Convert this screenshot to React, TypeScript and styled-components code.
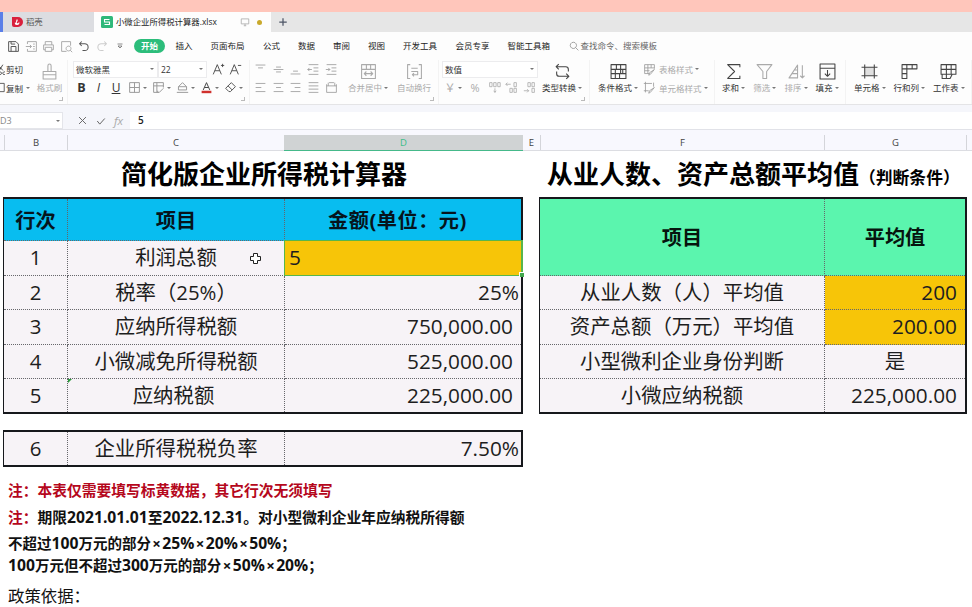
import React from "react";
import styled, { createGlobalStyle, css } from "styled-components";

const Global = createGlobalStyle`
  * { box-sizing: border-box; }
  html, body { margin: 0; padding: 0; background: #fff; overflow: hidden; }
  body { font-family: "Open Sans", "Noto Sans CJK SC", sans-serif; color: #1c1c1c; }
  svg { display: block; flex: none; }
`;

const Window = styled.div`
  width: 972px;
  height: 607px;
  overflow: hidden;
  display: flex;
  flex-direction: column;
  background: #fff;
`;

/* ---------- window tabs ---------- */
const TopStrip = styled.div`
  height: 12px;
  flex: none;
  background: #ffc6bb;
`;
const TabBar = styled.div`
  height: 20px;
  flex: none;
  display: flex;
  align-items: stretch;
  background: #e6e6e6;
`;
const HomeEdge = styled.div`
  width: 3px;
  background: #5a7fe8;
`;
const Tab = styled.div<{ $w: number; $active?: boolean }>`
  width: ${(p) => p.$w}px;
  display: flex;
  align-items: center;
  padding-left: ${(p) => (p.$active ? 7 : 9)}px;
  background: ${(p) => (p.$active ? "#fdfdfd" : "#dcdde1")};
  font-size: 8.4px;
  line-height: 20px;
  white-space: nowrap;
  color: ${(p) => (p.$active ? "#222" : "#555")};
`;
const TabText = styled.span<{ $w: number }>`
  width: ${(p) => p.$w}px;
  margin-left: 3px;
`;
const Dot = styled.i`
  width: 5px;
  height: 5px;
  margin-left: 7px;
  border-radius: 50%;
  background: #c9a92c;
`;
const NewTab = styled.div`
  width: 24px;
  display: flex;
  align-items: center;
  justify-content: center;
`;

/* ---------- ribbon ---------- */
const Menu = styled.div`
  height: 28px;
  flex: none;
  display: flex;
  align-items: center;
  background: #fdfdfd;
  font-size: 8.5px;
  white-space: nowrap;
`;
const QuickTools = styled.div`
  width: 134px;
  padding-left: 5px;
  display: flex;
  align-items: center;
`;
const Slot = styled.div<{ $w: number }>`
  width: ${(p) => p.$w}px;
  flex: none;
  display: flex;
  align-items: center;
  justify-content: center;
`;
const StartPill = styled.div`
  width: 31px;
  height: 14px;
  border-radius: 7px;
  background: #2cbd7b;
  color: #fff;
  font-weight: 700;
  line-height: 13px;
  text-align: center;
`;
const MenuItem = styled.div<{ $w: number }>`
  width: ${(p) => p.$w}px;
  flex: none;
  line-height: 14px;
  color: #222;
`;
const Search = styled.div`
  display: flex;
  align-items: center;
  gap: 2px;
  font-size: 8.5px;
  line-height: 14px;
  color: #666;
`;
const Ribbon = styled.div`
  height: 45px;
  flex: none;
  display: flex;
  background: #fdfdfd;
  border-bottom: 1px solid #e4e4e6;
  font-size: 8.5px;
  white-space: nowrap;
`;
const Group = styled.div<{ $w: number; $pad?: number }>`
  width: ${(p) => p.$w}px;
  flex: none;
  display: flex;
  padding-left: ${(p) => p.$pad ?? 0}px;
  border-right: 1px solid #f3f3f3;
`;
const Column = styled.div<{ $w?: number }>`
  width: ${(p) => (p.$w ? p.$w + "px" : "auto")};
  height: 44px;
  flex: none;
  display: flex;
  flex-direction: column;
`;
const ToolRow = styled.div<{ $dim?: boolean; $gap?: number }>`
  height: 18.5px;
  flex: none;
  display: flex;
  align-items: center;
  gap: ${(p) => p.$gap ?? 0}px;
  color: ${(p) => (p.$dim ? "#aaa" : "#333")};
`;
const Field = styled.div<{ $w: number }>`
  width: ${(p) => p.$w}px;
  height: 17px;
  padding: 0 3px 0 2px;
  display: flex;
  align-items: center;
  justify-content: space-between;
  border: 1px solid #ececee;
  background: #fff;
  color: #333;
`;
const Big = styled.div<{ $w: number; $dim?: boolean }>`
  width: ${(p) => p.$w}px;
  flex: none;
  display: flex;
  flex-direction: column;
  align-items: center;
  padding-top: 3px;
  color: ${(p) => (p.$dim ? "#aaa" : "#333")};
`;
const BigLabel = styled.div`
  height: 14px;
  margin-top: 1px;
  display: flex;
  align-items: center;
  line-height: 14px;
`;
const Caret = styled.i`
  width: 0;
  height: 0;
  flex: none;
  margin-left: 2px;
  border: 2px solid transparent;
  border-top: 2.5px solid #777;
  border-bottom: 0;
`;
const Corner = styled.div`
  width: 4px;
  height: 4px;
  flex: none;
  margin: auto 4px 3px auto;
  border: solid #bbb;
  border-width: 0 1px 1px 0;
`;
const Glyph = styled.span<{ $s: number; $b?: boolean; $i?: boolean; $u?: boolean; $c?: string }>`
  font-size: ${(p) => p.$s}px;
  line-height: 14px;
  font-weight: ${(p) => (p.$b ? 700 : 400)};
  font-style: ${(p) => (p.$i ? "italic" : "normal")};
  text-decoration: ${(p) => (p.$u ? "underline" : "none")};
  color: ${(p) => p.$c ?? "inherit"};
`;

/* ---------- formula bar and column headers ---------- */
const FormulaBar = styled.div`
  height: 25px;
  flex: none;
  padding-top: 7px;
  display: flex;
  background: #f5f6fb;
  border-bottom: 1px solid #e1e2e8;
`;
const NameBox = styled.div`
  width: 63px;
  height: 17px;
  display: flex;
  align-items: center;
  justify-content: space-between;
  padding-right: 2px;
  background: #fff;
  border: 1px solid #e4e5ea;
  border-left: 0;
  font-size: 9px;
  color: #888;
`;
const FormulaTools = styled.div`
  width: 67px;
  height: 17px;
  padding-left: 10px;
  display: flex;
  align-items: center;
`;
const FormulaInput = styled.div`
  flex: 1;
  height: 17px;
  padding-left: 8px;
  background: #fff;
  font-size: 10px;
  font-weight: 600;
  line-height: 17px;
`;
const ColumnHeads = styled.div`
  height: 21px;
  flex: none;
  display: flex;
  align-items: flex-end;
  background: #f8f8fe;
  border-bottom: 1px solid #dcdde2;
`;
const ColHead = styled.div<{ $w: number; $on?: boolean; $line?: boolean }>`
  width: ${(p) => p.$w}px;
  height: ${(p) => (p.$on ? 16 : 15)}px;
  margin-bottom: ${(p) => (p.$on ? -1 : 0)}px;
  flex: none;
  font-size: 9.5px;
  line-height: 15px;
  text-align: center;
  color: ${(p) => (p.$on ? "#3cbd88" : "#444")};
  background: ${(p) => (p.$on ? "#d0d3d4" : "transparent")};
  border-right: ${(p) => (p.$line ? "1px solid #d4d5da" : "0")};
  border-bottom: ${(p) => (p.$on ? "1.5px solid #45b98a" : "0")};
`;

/* ---------- sheet ---------- */
const Sheet = styled.div`
  flex: 1;
  display: flex;
  align-items: flex-start;
  padding-left: 3px;
  background: #fff;
`;
const Panel = styled.div<{ $w: number; $gap?: number }>`
  width: ${(p) => p.$w}px;
  margin-right: ${(p) => p.$gap ?? 0}px;
  flex: none;
`;
const Title = styled.div<{ $left: number }>`
  height: 46px;
  padding-left: ${(p) => p.$left}px;
  font-size: 26px;
  font-weight: 700;
  line-height: 47px;
  white-space: nowrap;
  color: #000;
  & small { font-size: 16.8px; }
`;
const Grid = styled.div<{ $cols: string; $rows: string; $mt?: number }>`
  display: grid;
  grid-template-columns: ${(p) => p.$cols};
  grid-template-rows: ${(p) => p.$rows};
  margin-top: ${(p) => p.$mt ?? 0}px;
  border: 2px solid #16181c;
  border-left-width: 1px;
  background: #f7f3f7;
`;
const Cell = styled.div<{
  $tone?: "blue" | "green" | "amber";
  $align?: "left" | "right";
  $pad?: number;
  $lastCol?: boolean;
  $lastRow?: boolean;
}>`
  position: relative;
  display: flex;
  align-items: center;
  justify-content: ${(p) =>
    p.$align === "right" ? "flex-end" : p.$align === "left" ? "flex-start" : "center"};
  padding: 0 ${(p) => p.$pad ?? 0}px ${(p) => (p.$tone === "blue" || p.$tone === "green" ? 0 : p.$lastRow ? 1 : 2)}px;
  font-size: ${(p) => (p.$align ? 20.8 : 20.4)}px;
  line-height: 30px;
  white-space: nowrap;
  color: #1d1d20;
  border-right: ${(p) => (p.$lastCol ? "0" : "1px dotted #66666b")};
  border-bottom: ${(p) => (p.$lastRow ? "0" : "1px dotted #66666b")};
  ${(p) => p.$tone === "blue" && css`background: #08bdf0; font-weight: 700; font-size: 20.2px; color: #06141c;`}
  ${(p) => p.$tone === "green" && css`background: #5bf5ae; font-weight: 700; font-size: 20.2px; color: #06140e;`}
  ${(p) => p.$tone === "amber" && css`background: #f7c508;`}
`;
const Amount = styled.span`
  margin-right: 11px;
  letter-spacing: 0.5px;
`;
const NudgedName = styled.span`
  margin-right: 5px;
`;
const Selection = styled.i`
  position: absolute;
  inset: -1px -2px -1px -1px;
  border: 1.5px solid #57b64c;
  border-right-width: 2px;
  &::after {
    content: "";
    position: absolute;
    right: -3px;
    bottom: -2px;
    width: 4px;
    height: 4px;
    background: #43a84e;
    border: 1px solid #fff;
    border-width: 1px 0 0 1px;
  }
`;
const Pointer = styled.svg`
  position: absolute;
  left: 181px;
  top: 11px;
`;
const ErrorMark = styled.i`
  position: absolute;
  left: 0;
  top: 0;
  border: 2px solid #2c9a3c;
  border-right-color: transparent;
  border-bottom-color: transparent;
`;
const Note = styled.div<{ $h: number; $red?: boolean; $plain?: boolean; $s?: number }>`
  height: ${(p) => p.$h}px;
  padding-left: 5px;
  font-size: ${(p) => p.$s ?? 14.75}px;
  line-height: ${(p) => p.$h}px;
  font-weight: ${(p) => (p.$plain ? 400 : 700)};
  white-space: nowrap;
  color: ${(p) => (p.$red ? "#b5071c" : "#111")};
  & em { font-style: normal; color: #b5071c; }
  & b { font-size: 15.7px; font-weight: 700; line-height: 1; }
`;
const Times = styled.span`
  padding: 0 1.4px;
  font-size: 15px;
  line-height: 1;
`;
const Notes = styled.div`
  padding-top: 10px;
`;

/* ---------- icons ---------- */
type IconProps = {
  d: string;
  w?: number;
  h?: number;
  vb?: string;
  c?: string;
  sw?: number;
  children?: React.ReactNode;
};
const Icon = ({ d, w = 12, h = w, vb = "0 0 16 16", c = "#555", sw = 1.2, children }: IconProps) => (
  <svg width={w} height={h} viewBox={vb} fill="none" stroke={c} strokeWidth={sw} strokeLinejoin="round">
    {children}
    <path d={d} />
  </svg>
);

const dim = "#aaa";
const dark = "#444";

const P = {
  save: "M2 2h9l3 3v9H2zM5 14V8h6v6M5 2v3h5",
  exportPdf: "M3 5V2h11v12H3v-3M1 8h7M6 6l2 2-2 2M10 5h2M10 8h2M10 11h2",
  print: "M4 6V2h8v4M4 12H2V6h12v6h-2M4 9h8v5H4z",
  preview: "M8 14H2V2h11v5M10.500 7.500a3 3 0 1 0 .01 0M12.500 12.500l2.500 2.500",
  undo: "M5 2L2 5l3 3M2 5h7a4.500 4.500 0 0 1 0 9H6",
  redo: "M11 2l3 3-3 3M14 5H7a4.500 4.500 0 0 0 0 9h3",
  more: "M3 4h10M4 8l4 4 4-4z",
  brush: "M6.500 8V2.500a1.500 1.500 0 0 1 3 0V8M2 8h12v7H2zM2 11h12",
  cut: "M-1 2l7 8M6 2L1 10M2 12a2 2 0 1 1-.01 0M8 12a2 2 0 1 1-.01 0",
  copy: "M2 2h8v12H0",
  border: "M2 2h12v12H2zM8 2v12M2 8h12",
  cellStyle: "M8 14H2V2h12v6M2 6h12M6 2v12M14 9l-5 5H7v-2",
  bucket: "M3 7l5-5 5 5v4H3zM1 14h14M3 7h10",
  eraser: "M2 9l7-7 5 5-6 6H6zM5 6l5 5",
  top: "M2 2.500h12M5 6h6",
  middle: "M2 8h12M5 5h6M5 11h6",
  bottom: "M2 13.500h12M5 10h6",
  indentOut: "M2 2h12M8 6h6M8 10h6M2 14h12M6 8H1M3 6L1 8l2 2",
  indentIn: "M2 2h12M8 6h6M8 10h6M2 14h12M6 8H1M4 6l2 2-2 2",
  left: "M2 3h12M2 8h7M2 13h12",
  center: "M2 3h12M5 8h6M2 13h12",
  right: "M2 3h12M7 8h7M2 13h12",
  justify: "M2 2h12M2 6h12M2 10h12M2 14h12",
  distribute: "M2 4v10h12V4M2 6h12M4 2v4M12 2v4M5 2h6",
  merge: "M1.500 1.500h13v13h-13zM1.500 6h13M6 1.500v4.500M10 1.500v4.500M4 10h8M6 8l-2 2 2 2M10 8l2 2-2 2",
  wrap: "M4 1.500H1.500v13H4M12 1.500h2.500v13H12M5 5h6M5 8h6v3H6M7.500 9.500L6 11l1.500 1.500",
  convert: "M4.500 1L2 3.500 4.500 6M2 3.500h9a2.500 2.500 0 0 1 2.500 2.500v2M11.500 10l2.500 2.500-2.500 2.500M14 12.500H5A2.500 2.500 0 0 1 2.500 10V8",
  condFormat: "M1 1.500h14v13H1zM1 6h14M1 10h14M6 1.500v4.500M10 1.500v8.500M5 6v8.500M9 10v4.500M12 6v4",
  tableStyle: "M8 13H2V2h12v5M2 6h12M6 2v11M10 2v4M2 9.500h6M14 8l-5 6-2 1 1-3z",
  cellBrush: "M3 1v13M1 3h10M1 12h6M13 2v5M14 8l-5 6-2 1 1-3z",
  sum: "M14 4V1.500H2.500L9 8l-6.500 6.500H14V12",
  filter: "M1 1.500h14L10 8v6.500H6.500V8z",
  sort: "M1 14L9 2v12zM4 10h5M6 6.500h3M13.500 2v12M11.500 12l2 2 2-2",
  fillDown: "M1 1h14v14H1zM1 5h14M8 6.500v6M5.500 10L8 12.500 10.500 10",
  cell: "M3.500 1.500v13M12.500 1.500v13M.5 4h15M.5 12h15",
  rowcol: "M1 1.500h14v4H1zM1 1.500h4.500v13H1zM5.500 1.500v4M10.500 1.500v4M1 10h4.500",
  sheet: "M1 1.500h14v9H1zM1 6h14M6 1.500v13M10.500 1.500v9M2 10v4.500h7.500l2-4",
};

const Dropped = ({ children }: { children: React.ReactNode }) => (
  <>
    {children}
    <Caret />
  </>
);

type BigProps = { w: number; d: string; label: string; off?: boolean; caret?: boolean; fill?: string };
const BigTool = ({ w, d, label, off, caret = true, fill }: BigProps) => (
  <Big $w={w} $dim={off}>
    <Icon d={d} w={17} c={off ? dim : dark} sw={1}>
      {fill && <rect x="3.500" y="4" width="9" height="8" fill={fill} stroke="none" />}
    </Icon>
    <BigLabel>
      {label}
      {caret && <Caret />}
    </BigLabel>
  </Big>
);

const menus: [string, number][] = [
  ["插入", 35], ["页面布局", 52.5], ["公式", 35], ["数据", 35], ["审阅", 35], ["视图", 35],
  ["开发工具", 52.5], ["会员专享", 52], ["智能工具箱", 61],
];

const leftRows: [string, string, string, number][] = [
  ["2", "税率（25%）", "25%", 2],
  ["3", "应纳所得税额", "750,000.00", 8],
  ["4", "小微减免所得税额", "525,000.00", 8],
  ["5", "应纳税额", "225,000.00", 8],
];

const rightRows: { name: string; value: string; amber?: boolean; mid?: boolean }[] = [
  { name: "从业人数（人）平均值", value: "200", amber: true },
  { name: "资产总额（万元）平均值", value: "200.00", amber: true },
  { name: "小型微利企业身份判断", value: "是", mid: true },
  { name: "小微应纳税额", value: "225,000.00" },
];

export default function App() {
  return (
    <Window>
      <Global />
      <TopStrip />
      <TabBar>
        <HomeEdge />
        <Tab $w={91}>
          <svg width="11" height="12" viewBox="0 0 11 12">
            <path d="M0 1h6a5 5 0 0 1 0 10H2a2 2 0 0 1-2-2z" fill="#d9203c" />
            <path d="M5 3c2 2-1 3 0 4s2-.5 2-1.500c1 2 0 3.500-2 3.500S2.500 8 3 6c.5 1 1 1 1 .5S4 4 5 3z" fill="#fff" />
          </svg>
          <TabText $w={30}>稻壳</TabText>
        </Tab>
        <Tab $w={177} $active>
          <svg width="12" height="12" viewBox="0 0 12 12">
            <rect width="12" height="12" rx="1.500" fill="#2fb87a" />
            <path d="M8.500 3.500h-5V6h5v2.500h-5" fill="none" stroke="#fff" strokeWidth="1.100" />
          </svg>
          <TabText $w={124}>小微企业所得税计算器.xlsx</TabText>
          <Icon d="M2 3h12v8H2zM6 14h4M8 11v3" w={10} c="#aaa" sw={1.3} />
          <Dot />
        </Tab>
        <NewTab>
          <Icon d="M8 2v12M2 8h12" w={10} c="#4d5566" sw={2} />
        </NewTab>
      </TabBar>

      <Menu>
        <QuickTools>
          <Slot $w={17.5}><Icon d={P.save} w={13} c="#555" /></Slot>
          <Slot $w={17.5}><Icon d={P.exportPdf} w={13} c={dim} /></Slot>
          <Slot $w={17.5}><Icon d={P.print} w={13} c={dim} /></Slot>
          <Slot $w={17.5}><Icon d={P.preview} w={13} c={dim} /></Slot>
          <Slot $w={17.5}><Icon d={P.undo} w={12} c="#555" sw={1.4} /></Slot>
          <Slot $w={18}><Icon d={P.redo} w={12} c="#ccc" sw={1.4} /></Slot>
          <Slot $w={18}><Icon d={P.more} w={8} c="#666" sw={1.5} /></Slot>
        </QuickTools>
        <StartPill>开始</StartPill>
        <Slot $w={10.5} />
        {menus.map(([t, w]) => (
          <MenuItem key={t} $w={w}>{t}</MenuItem>
        ))}
        <Search>
          <Icon d="M7 2a5 5 0 1 0 .01 0M11 11l4 4" w={10} c="#888" />
          <span>查找命令、搜索模板</span>
        </Search>
      </Menu>

      <Ribbon>
        <Group $w={68}>
          <Column $w={35}>
            <ToolRow $gap={1}><Icon d={P.cut} w={5} h={12} vb="2 0 7 16" c="#444" sw={1.3} />剪切</ToolRow>
            <ToolRow $gap={1}><Icon d={P.copy} w={5} h={11} vb="4 0 7 16" c="#444" />复制<Caret /></ToolRow>
          </Column>
          <Column $w={32}>
            <BigTool w={29} d={P.brush} label="格式刷" off caret={false} />
            <Corner />
          </Column>
        </Group>
        <Group $w={182} $pad={5}>
          <Column $w={176}>
            <ToolRow>
              <Field $w={85}>微软雅黑<Caret /></Field>
              <Field $w={49}>22<Caret /></Field>
              <Slot $w={22}><Icon d="M1.500 14L6.500 2l5 12M3.500 9.500h6M11 3h4M13 1v4" w={13} c="#444" sw={1.1} /></Slot>
              <Slot $w={13}><Icon d="M1.500 14L6.500 2l5 12M3.500 9.500h6M11 3h4" w={13} c="#444" sw={1.1} /></Slot>
            </ToolRow>
            <ToolRow>
              <Slot $w={17}><Glyph $s={12.5} $b>B</Glyph></Slot>
              <Slot $w={17}><Glyph $s={12.5} $i>I</Glyph></Slot>
              <Slot $w={18}><Glyph $s={12} $u>U</Glyph></Slot>
              <Slot $w={24}><Dropped><Icon d={P.border} w={13} c="#999" /></Dropped></Slot>
              <Slot $w={24}><Dropped><Icon d={P.cellStyle} w={13} c="#999" /></Dropped></Slot>
              <Slot $w={24}><Dropped><Icon d={P.bucket} w={13} c="#999" /></Dropped></Slot>
              <Slot $w={24}>
                <Dropped>
                  <Icon d="M4 11L8 2l4 9M5.500 8h5" w={13} c="#444">
                    <rect x="2" y="12" width="12" height="3" fill="#d0312d" stroke="none" />
                  </Icon>
                </Dropped>
              </Slot>
              <Slot $w={24}><Dropped><Icon d={P.eraser} w={13} c="#555" /></Dropped></Slot>
            </ToolRow>
            <Corner />
          </Column>
        </Group>
        <Group $w={189} $pad={2}>
          <Column $w={89}>
            <ToolRow>
              {[P.top, P.middle, P.bottom, P.indentOut, P.indentIn].map((d) => (
                <Slot key={d} $w={17.6}><Icon d={d} w={13} c="#999" sw={1} /></Slot>
              ))}
            </ToolRow>
            <ToolRow>
              {[P.left, P.center, P.right, P.justify, P.distribute].map((d) => (
                <Slot key={d} $w={17.6}><Icon d={d} w={13} c="#999" sw={1} /></Slot>
              ))}
            </ToolRow>
          </Column>
          <BigTool w={54} d={P.merge} label="合并居中" off />
          <Column $w={43}>
            <BigTool w={38} d={P.wrap} label="自动换行" off caret={false} />
            <Corner />
          </Column>
        </Group>
        <Group $w={151} $pad={3}>
          <Column $w={98}>
            <ToolRow><Field $w={96}>数值<Caret /></Field></ToolRow>
            <ToolRow $dim>
              <Slot $w={22}><Dropped><Glyph $s={11}>￥</Glyph></Dropped></Slot>
              <Slot $w={22}><Glyph $s={11}>%</Glyph></Slot>
              <Slot $w={16}><Icon d="M2 2h3v5H2zM7 2h3v5H7zM12 2h3v5h-3zM8.500 9v5M7 12l1.500 2 1.500-2" w={13} c={dim} sw={1} /></Slot>
              <Slot $w={18}><Icon d="M7 4H1M3 2L1 4l2 2M11 2h3v5h-3zM6 9h3v5H6zM11 9h3v5h-3z" w={13} c={dim} sw={1} /></Slot>
              <Slot $w={18}><Icon d="M1 12h6M5 10l2 2-2 2M6 2h3v5H6zM11 2h3v5h-3zM11 9h3v5h-3z" w={13} c={dim} sw={1} /></Slot>
            </ToolRow>
          </Column>
          <Column $w={49}>
            <BigTool w={44} d={P.convert} label="类型转换" />
            <Corner />
          </Column>
        </Group>
        <Group $w={125} $pad={6}>
          <BigTool w={44} d={P.condFormat} label="条件格式" />
          <Column>
            <ToolRow $dim>
              <Slot $w={19}><Icon d={P.tableStyle} w={13} c="#999" sw={1} /></Slot>
              <Dropped>表格样式</Dropped>
            </ToolRow>
            <ToolRow $dim>
              <Slot $w={19}><Icon d={P.cellBrush} w={13} c="#999" sw={1} /></Slot>
              <Dropped>单元格样式</Dropped>
            </ToolRow>
          </Column>
        </Group>
        <Group $w={131} $pad={3}>
          <BigTool w={31} d={P.sum} label="求和" />
          <BigTool w={31.5} d={P.filter} label="筛选" off />
          <BigTool w={31} d={P.sort} label="排序" off />
          <BigTool w={31} d={P.fillDown} label="填充" />
        </Group>
        <Group $w={126} $pad={4}>
          <BigTool w={39.5} d={P.cell} label="单元格" fill="#e0e0e0" />
          <BigTool w={39.5} d={P.rowcol} label="行和列" />
          <BigTool w={39.5} d={P.sheet} label="工作表" />
        </Group>
      </Ribbon>

      <FormulaBar>
        <NameBox><span>D3</span><Caret /></NameBox>
        <FormulaTools>
          <Slot $w={18}><Icon d="M3 3l10 10M13 3L3 13" w={11} c="#666" sw={1.4} /></Slot>
          <Slot $w={19}><Icon d="M2 8l4 5 8-9" w={10} c="#666" sw={1.6} /></Slot>
          <Slot $w={17}><Glyph $s={11.5} $i $c="#aaa">fx</Glyph></Slot>
        </FormulaTools>
        <FormulaInput>5</FormulaInput>
      </FormulaBar>
      <ColumnHeads>
        <ColHead $w={5} $line />
        <ColHead $w={63} $line>B</ColHead>
        <ColHead $w={216}>C</ColHead>
        <ColHead $w={239} $on>D</ColHead>
        <ColHead $w={18} $line>E</ColHead>
        <ColHead $w={284} $line>F</ColHead>
        <ColHead $w={142} $line>G</ColHead>
      </ColumnHeads>

      <Sheet>
        <Panel $w={520} $gap={16}>
          <Title $left={118}>简化版企业所得税计算器</Title>
          <Grid $cols="64px 217px 1fr" $rows="42px 35px 34px 35px 34px 33px">
            <Cell $tone="blue">行次</Cell>
            <Cell $tone="blue">项目</Cell>
            <Cell $tone="blue" $lastCol><Amount>金额(单位：元)</Amount></Cell>
            <Cell>1</Cell>
            <Cell>
              利润总额
              <Pointer width="13" height="13" viewBox="0 0 13 13">
                <path d="M4.500 1.500h4v3h3v4h-3v3h-4v-3h-3v-4h3z" fill="#fff" stroke="#222" />
              </Pointer>
            </Cell>
            <Cell $tone="amber" $align="left" $pad={4} $lastCol>
              5<Selection />
            </Cell>
            {leftRows.map(([n, name, v, pad], i) => (
              <React.Fragment key={n}>
                <Cell $lastRow={i === 3}>{n}</Cell>
                <Cell $lastRow={i === 3}>
                  {i === 3 ? (
                    <>
                      <ErrorMark />
                      <NudgedName>{name}</NudgedName>
                    </>
                  ) : (
                    name
                  )}
                </Cell>
                <Cell $align="right" $pad={pad} $lastCol $lastRow={i === 3}>{v}</Cell>
              </React.Fragment>
            ))}
          </Grid>
          <Grid $cols="64px 217px 1fr" $rows="33px" $mt={16}>
            <Cell $lastRow>6</Cell>
            <Cell $lastRow>企业所得税税负率</Cell>
            <Cell $align="right" $pad={2} $lastCol $lastRow>7.50%</Cell>
          </Grid>
          <Notes>
            <Note $h={27} $red>注：本表仅需要填写标黄数据，其它行次无须填写</Note>
            <Note $h={27}>
              <em>注：</em>期限<b>2021.01.01</b>至<b>2022.12.31</b>。对小型微利企业年应纳税所得额
            </Note>
            <Note $h={26} $s={14.5}>
              不超过<b>100</b>万元的部分<Times>×</Times><b>25%</b><Times>×</Times><b>20%</b><Times>×</Times><b>50%</b>；
            </Note>
            <Note $h={18} $s={14.5}>
              <b>100</b>万元但不超过<b>300</b>万元的部分<Times>×</Times><b>50%</b><Times>×</Times><b>20%</b>；
            </Note>
            <Note $h={42} $plain $s={16.4}>政策依据：</Note>
          </Notes>
        </Panel>
        <Panel $w={428}>
          <Title $left={8}>从业人数、资产总额平均值<small>（判断条件）</small></Title>
          <Grid $cols="285px 1fr" $rows="77px 34px 35px 34px 33px">
            <Cell $tone="green">项目</Cell>
            <Cell $tone="green" $lastCol>平均值</Cell>
            {rightRows.map((r, i) => (
              <React.Fragment key={r.name}>
                <Cell $lastRow={i === 3}>{r.name}</Cell>
                <Cell
                  $tone={r.amber ? "amber" : undefined}
                  $align={r.mid ? undefined : "right"}
                  $pad={r.mid ? 0 : 8}
                  $lastCol
                  $lastRow={i === 3}
                >
                  {r.value}
                </Cell>
              </React.Fragment>
            ))}
          </Grid>
        </Panel>
      </Sheet>
    </Window>
  );
}
